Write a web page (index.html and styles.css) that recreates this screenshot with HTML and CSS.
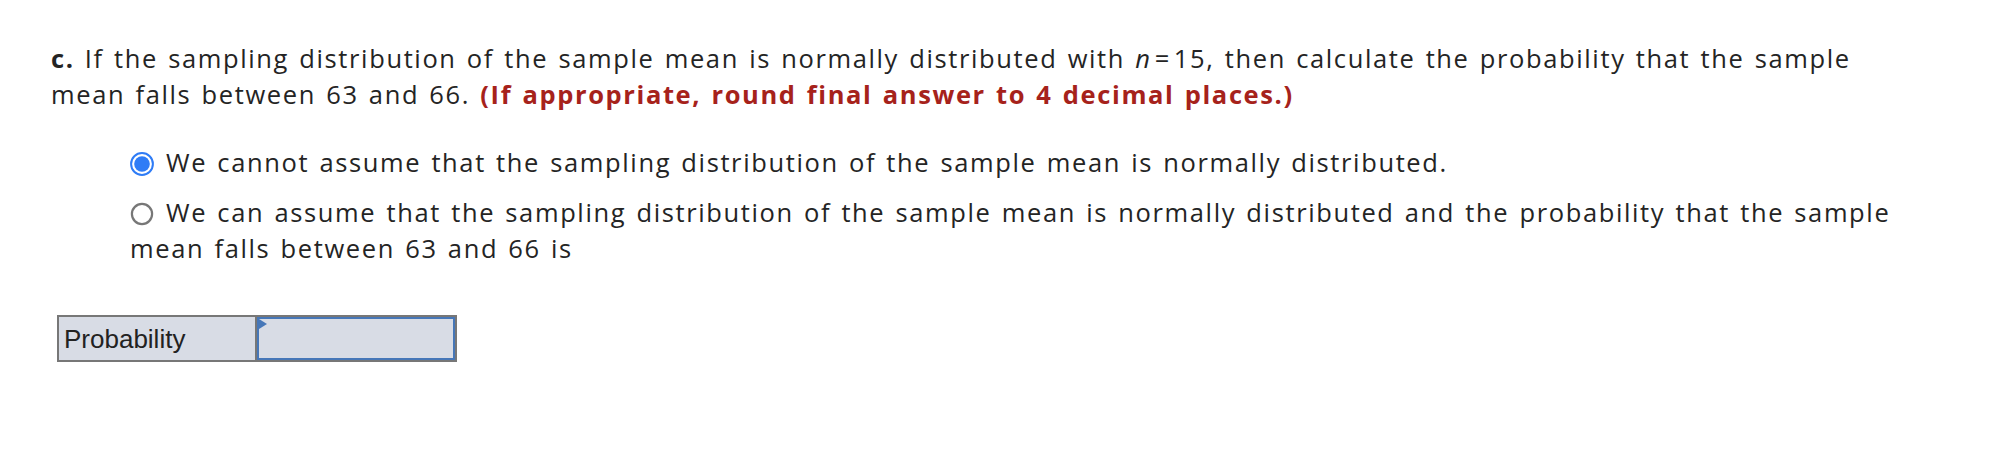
FILE: index.html
```html
<!DOCTYPE html>
<html lang="en">
<head>
<meta charset="utf-8">
<title>Question c</title>
<link rel="stylesheet" href="styles.css">
</head>
<body>
<div class="question">
  <p class="prompt"><b>c.</b> If the sampling distribution of the sample mean is normally distributed with <span class="math"><i>n</i><span class="eq">=</span>15</span>, then calculate the probability that the sample mean falls between 63 and 66. <b class="hint">(If appropriate, round final answer to 4 decimal places.)</b></p>
  <div class="options">
    <label class="option">
      <svg class="radio" viewBox="0 0 24 24" width="24" height="24"><circle cx="12" cy="12" r="10.9" fill="#fff" stroke="#2f7cf6" stroke-width="2"/><circle cx="12" cy="12" r="7.8" fill="#2f7cf6"/></svg>We cannot assume that the sampling distribution of the sample mean is normally distributed.
    </label>
    <label class="option">
      <svg class="radio" viewBox="0 0 24 24" width="24" height="24"><circle cx="12" cy="12" r="10.1" fill="#fff" stroke="#777" stroke-width="2.2"/></svg>We can assume that the sampling distribution of the sample mean is normally distributed and the probability that the sample mean falls between 63 and 66 is
    </label>
  </div>
  <div class="answer-table">
    <div class="cell label-cell">Probability</div>
    <div class="cell input-cell"><span class="marker"></span></div>
  </div>
</div>
</body>
</html>
```
FILE: styles.css
```css
html, body {
  margin: 0;
  padding: 0;
  background: #fff;
}
body {
  font-family: "Open Sans", "Lato", sans-serif;
  color: #242424;
  font-size: 25.5px;
  line-height: 36px;
  letter-spacing: 1.62px;
  word-spacing: 2px;
}
.question {
  padding: 40px 87px 0 51px;
}
.prompt {
  margin: 0;
}
.prompt b {
  font-weight: 700;
}
.hint {
  color: #a6221b;
}
.math i {
  font-style: italic;
}
.eq {
  margin: 0 3px;
}
.options {
  margin: 32px 0 0 79px;
  display: flex;
  flex-direction: column;
  gap: 14px;
}
.option {
  display: block;
}
.radio {
  vertical-align: -4px;
  margin-right: 12px;
}
.answer-table {
  margin: 49px 0 0 6px;
  display: inline-flex;
  border: 2px solid #777;
  height: 43px;
  background: #d8dce5;
  letter-spacing: 0;
  word-spacing: 0;
}
.cell {
  width: 198px;
  box-sizing: border-box;
}
.label-cell {
  border-right: 2px solid #777;
  font-family: "Liberation Sans", Arial, sans-serif;
  font-size: 26px;
  line-height: 30px;
  padding: 7px 0 0 5px;
  color: #222;
}
.input-cell {
  position: relative;
  border: 2px solid #4677b8;
}
.marker {
  position: absolute;
  left: 0;
  top: 0;
  width: 0;
  height: 0;
  border-top: 5px solid transparent;
  border-bottom: 5px solid transparent;
  border-left: 8px solid #4677b8;
}
```
